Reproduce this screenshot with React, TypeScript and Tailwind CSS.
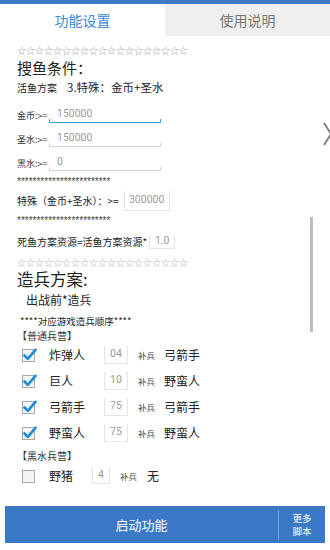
import React from "react";

// 设置页 (功能设置 tab)

const cjk = "font-['Noto_Sans_CJK_SC','Noto_Sans',sans-serif]";
const num = "font-['Roboto','Noto_Sans_CJK_SC',sans-serif]";

function Check({ on }: { on: boolean }) {
  return (
    <svg width="16" height="16" viewBox="0 0 16 16" className="shrink-0">
      <rect x="1.5" y="2.5" width="12" height="12" fill="#f4f4f4" stroke="#a8a8a8" strokeWidth="1" />
      {on && (
        <path d="M3.5 8.5 L6.8 11.8 L14.5 2.8" fill="none" stroke="#1d8bd8" strokeWidth="2.6" strokeLinecap="round" strokeLinejoin="round" />
      )}
    </svg>
  );
}

function Field({ label, value, active }: { label: string; value: string; active?: boolean }) {
  return (
    <div className="flex h-[24px] items-center">
      <span className="w-[32px] text-[9px] text-[#333]">{label}</span>
      <div
        className={`relative flex h-[16px] w-[112px] items-center border-b px-[8px] ${
          active ? "border-[#33a6dd]" : "border-[#d4d4d4]"
        }`}
      >
        <span className={`${num} text-[10.5px] text-[#999]`}>{value}</span>
        <div className={`absolute bottom-0 left-0 h-[3px] w-px ${active ? "bg-[#33a6dd]" : "bg-[#d4d4d4]"}`} />
        <div className={`absolute bottom-0 right-0 h-[3px] w-px ${active ? "bg-[#33a6dd]" : "bg-[#d4d4d4]"}`} />
      </div>
    </div>
  );
}

function Box({ value, w, h = 18 }: { value: string; w: number; h?: number }) {
  return (
    <div
      className={`flex items-center justify-center border-x border-b border-[#e4e4e4] ${num} text-[10.5px] text-[#9a9a9a]`}
      style={{ width: w, height: h }}
    >
      {value}
    </div>
  );
}

const troops = [
  { name: "炸弹人", n: "04", target: "弓箭手" },
  { name: "巨人", n: "10", target: "野蛮人" },
  { name: "弓箭手", n: "75", target: "弓箭手" },
  { name: "野蛮人", n: "75", target: "野蛮人" },
];

export default function App() {
  const stars = "☆".repeat(19);
  const asts = "*".repeat(24);

  return (
    <div className={`relative flex h-[550px] w-[330px] flex-col overflow-hidden bg-white ${cjk}`}>
      {/* 顶部标签 */}
      <div className="h-[4px] bg-[#3b79c6]" />
      <div className="flex h-[32px]">
        <div className="flex w-[165px] items-center justify-center bg-white text-[14px] text-[#3b86d6]">功能设置</div>
        <div className="flex flex-1 items-center justify-center bg-[#efefef] text-[14px] text-[#777]">使用说明</div>
      </div>

      {/* 内容 */}
      <div className="flex-1 pl-[17px] pt-[6px] leading-none text-[#222]">
        <div className="flex h-[16px] items-center text-[9px] text-[#999]">{stars}</div>
        <div className="flex h-[18px] items-center text-[15px]">搜鱼条件：</div>
        <div className="flex h-[24px] items-center">
          <span className="w-[50px] text-[10px]">活鱼方案</span>
          <span className="text-[11.5px]">3.特殊：金币+圣水</span>
        </div>
        <div className="mt-[3px]">
          <Field label="金币:>=" value="150000" active />
          <Field label="圣水:>=" value="150000" />
          <Field label="黑水:>=" value="0" />
        </div>
        <div className="flex h-[14px] items-center font-['Liberation_Sans',sans-serif] text-[10px] text-[#444]">{asts}</div>
        <div className="flex h-[24px] items-center">
          <span className="text-[10px]">特殊（金币+圣水）：&gt;=</span>
          <div className="ml-[5px]">
            <Box value="300000" w={46} h={20} />
          </div>
        </div>
        <div className="flex h-[16px] items-center font-['Liberation_Sans',sans-serif] text-[10px] text-[#444]">{asts}</div>
        <div className="flex h-[26px] items-center">
          <span className="text-[10px]">死鱼方案资源=活鱼方案资源*</span>
          <div className="ml-[2px]">
            <Box value="1.0" w={26} h={14} />
          </div>
        </div>
        <div className="flex h-[14px] items-center text-[9px] text-[#aaa]">{stars}</div>
        <div className="flex h-[20px] items-center text-[16.5px]">造兵方案:</div>
        <div className="mt-[1px] flex h-[20px] items-center pl-[9px] text-[12px]">出战前*造兵</div>
        <div className="mt-[5px] flex h-[14px] items-center pl-[3px] text-[9.5px]">****对应游戏造兵顺序****</div>
        <div className="flex h-[13px] items-center text-[10px] text-[#333]">【普通兵营】</div>

        {troops.map((t) => (
          <div key={t.name} className="flex h-[26px] items-center">
            <div className="ml-[4px] w-[28px]">
              <Check on />
            </div>
            <span className="w-[55px] text-[12px]">{t.name}</span>
            <Box value={t.n} w={24} h={18} />
            <span className="ml-[10px] w-[26px] text-[8.5px] text-[#444]">补兵</span>
            <span className="text-[12px]">{t.target}</span>
          </div>
        ))}

        <div className="flex h-[20px] items-center text-[10px] text-[#333]">【黑水兵营】</div>
        <div className="flex h-[20px] items-center">
          <div className="ml-[4px] w-[28px]">
            <Check on={false} />
          </div>
          <span className="w-[43px] text-[12px]">野猪</span>
          <Box value="4" w={18} h={16} />
          <span className="ml-[10px] w-[27px] text-[8.5px] text-[#444]">补兵</span>
          <span className="text-[12px]">无</span>
        </div>
      </div>

      {/* 底部按钮 */}
      <div className="px-[5px] pb-[7px]">
        <div className="flex h-[37px] items-center bg-[#3b79c6] text-white">
          <div className="flex flex-1 items-center justify-center text-[13px]">启动功能</div>
          <div className="h-[30px] w-px bg-[#7aa5db]" />
          <div className="flex w-[46px] flex-col items-center text-[9.5px] leading-[13px]">
            <span>更多</span>
            <span>脚本</span>
          </div>
        </div>
      </div>

      {/* 滚动条 */}
      <div className="absolute left-[310px] top-[217px] h-[115px] w-[3px] bg-[#bdbdbd]" />
      {/* 右侧箭头 */}
      <svg className="absolute left-[321px] top-[121px]" width="14" height="26" viewBox="0 0 14 26">
        <path d="M3 2 L10 13 L3 24" fill="none" stroke="#777" strokeWidth="1.8" />
      </svg>
    </div>
  );
}
